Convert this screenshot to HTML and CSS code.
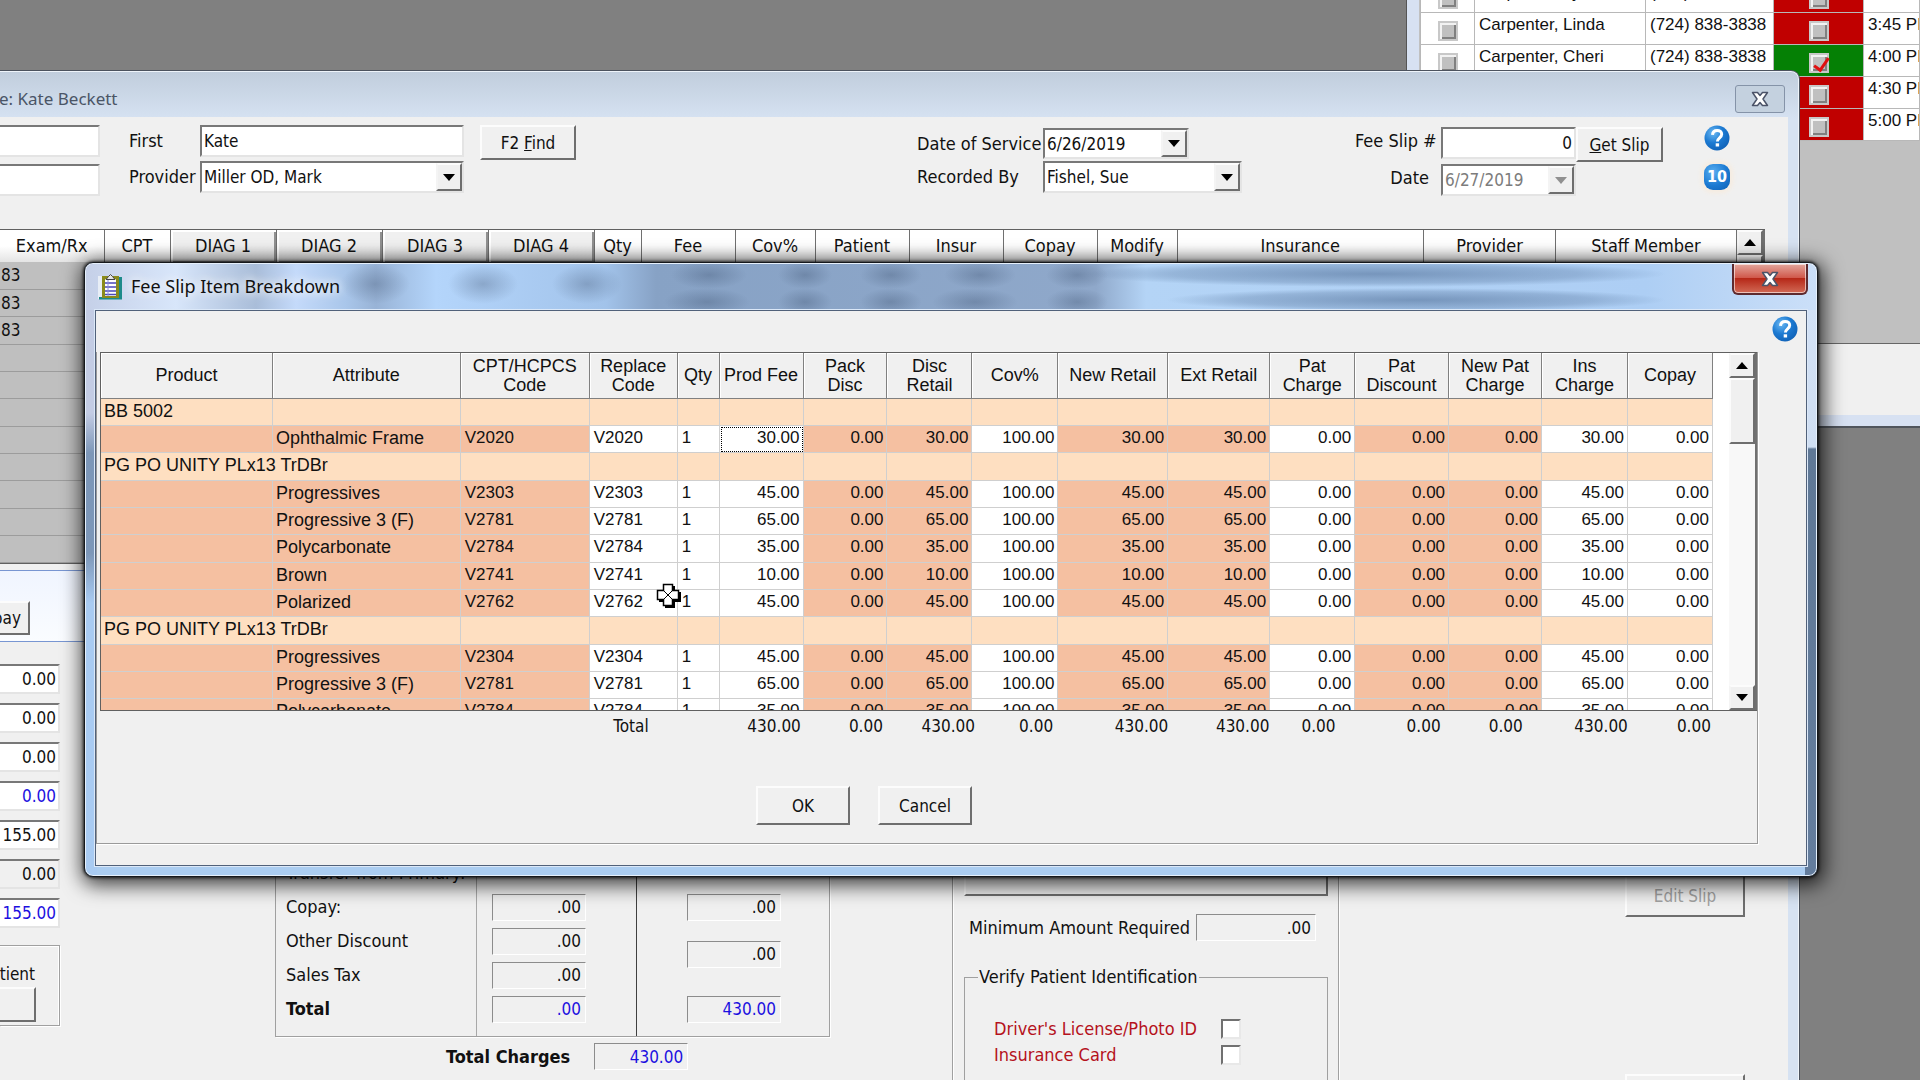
FILE: index.html
```html
<!DOCTYPE html>
<html lang="en">
<head>
    <meta charset="UTF-8">
    <meta name="viewport" content="width=device-width, initial-scale=1.0">
    <title>Fee Slip Item Breakdown</title>
    <link rel="stylesheet" href="styles.css">
</head>
<body>
    <svg class="defs" width="0" height="0" aria-hidden="true">
        <defs>
            <radialGradient id="ball" cx="0.35" cy="0.3" r="0.8">
                <stop offset="0" stop-color="#6bb8f2"/>
                <stop offset="0.5" stop-color="#1c7ad2"/>
                <stop offset="1" stop-color="#0f5fb4"/>
            </radialGradient>
            <symbol id="icon-close" viewBox="0 0 18 16">
                <path d="M1.5 1.5h5L9 4.500l2.500-3h5L12 8l4.500 6.500h-5L9 11.500l-2.500 3h-5L6 8z" fill="#fff" stroke="#4b5368" stroke-width="1.500" stroke-linejoin="round"/>
            </symbol>
            <symbol id="icon-help" viewBox="0 0 26 26">
                <circle cx="13" cy="13" r="12.500" fill="url(#ball)"/>
                <path d="M8.500 9.800C8.700 6.800 10.700 5.400 13.200 5.400c2.600 0 4.500 1.500 4.500 3.900 0 3.400-4.300 3.600-4.300 7.200" fill="none" stroke="#fff" stroke-width="3"/>
                <rect x="11.700" y="18.300" width="3.400" height="3.200" fill="#fff"/>
            </symbol>
        </defs>
    </svg>

    <div class="desktop">
        <!-- Appointment list -->
        <section class="window schedule">
            <table class="schedule-table">
                <colgroup><col class="c-check"><col class="c-name"><col class="c-phone"><col class="c-flag"><col></colgroup>
                <tbody id="scheduleRows"></tbody>
            </table>
        </section>

        <!-- Fee slip -->
        <section class="window fee-slip">
            <header class="titlebar">
                <h1>e: Kate Beckett</h1>
                <button class="close" type="button" aria-label="Close fee slip"><svg width="18" height="16"><use href="#icon-close"/></svg></button>
            </header>
            <div class="client">
                <form class="form-bar">
                    <div class="fields cut">
                        <input class="box" type="text" aria-label="Last">
                        <input class="box" type="text" aria-label="Location">
                    </div>
                    <div class="fields patient">
                        <label for="first">First</label>
                        <input class="box" id="first" type="text" value="Kate">
                        <label for="provider">Provider</label>
                        <div class="combo">
                            <select id="provider"><option>Miller OD, Mark</option></select>
                            <span class="arrow down"></span>
                        </div>
                    </div>
                    <button class="btn find" type="button">F2 <u>F</u>ind</button>
                    <div class="fields service">
                        <label for="service">Date of Service</label>
                        <div class="combo date">
                            <select id="service"><option>6/26/2019</option></select>
                            <span class="arrow down"></span>
                        </div>
                        <label for="recorded">Recorded By</label>
                        <div class="combo">
                            <select id="recorded"><option>Fishel, Sue</option></select>
                            <span class="arrow down"></span>
                        </div>
                    </div>
                    <div class="fields slip">
                        <label for="slipNo">Fee Slip #</label>
                        <input class="box num" id="slipNo" type="text" value="0">
                        <button class="btn get" type="button"><u>G</u>et Slip</button>
                        <label for="slipDate">Date</label>
                        <div class="combo">
                            <select id="slipDate" disabled><option>6/27/2019</option></select>
                            <span class="arrow down"></span>
                        </div>
                    </div>
                    <div class="help-col">
                        <button class="icon-btn" type="button" aria-label="Help"><svg width="26" height="26"><use href="#icon-help"/></svg></button>
                        <button class="icon-btn ten" type="button">10</button>
                    </div>
                </form>

                <div class="slip-grid">
                    <table class="slip-table">
                        <thead>
                            <tr>
                                <th class="w-exam">Exam/Rx</th>
                                <th class="w-cpt">CPT</th>
                                <th class="w-diag raised">DIAG 1</th>
                                <th class="w-diag raised">DIAG 2</th>
                                <th class="w-diag raised">DIAG 3</th>
                                <th class="w-diag raised">DIAG 4</th>
                                <th class="w-qty">Qty</th>
                                <th class="w-money">Fee</th>
                                <th class="w-small">Cov%</th>
                                <th class="w-money">Patient</th>
                                <th class="w-money">Insur</th>
                                <th class="w-money">Copay</th>
                                <th class="w-small">Modify</th>
                                <th>Insurance</th>
                                <th class="w-prov">Provider</th>
                                <th class="w-staff">Staff Member</th>
                            </tr>
                        </thead>
                        <tbody id="slipRows"></tbody>
                    </table>
                    <div class="scrollbar"><span class="arrow up"></span><span class="thumb"></span></div>
                </div>

                <div class="copay-band">
                    <button class="btn" type="button">Copay</button>
                </div>

                <div class="lower">
                    <div class="left-col">
                        <input class="box num" type="text" value="0.00" aria-label="Amount 1">
                        <input class="box num" type="text" value="0.00" aria-label="Amount 2">
                        <input class="box num" type="text" value="0.00" aria-label="Amount 3">
                        <input class="box num blue" type="text" value="0.00" aria-label="Amount 4">
                        <input class="box num" type="text" value="155.00" aria-label="Amount 5">
                        <input class="box num locked" type="text" value="0.00" aria-label="Amount 6" readonly>
                        <input class="box num blue" type="text" value="155.00" aria-label="Amount 7">
                        <div class="patient-box">
                            <span>Patient</span>
                            <button class="btn" type="button" aria-label="Patient"></button>
                        </div>
                    </div>

                    <div class="charges">
                        <div class="charges-box">
                            <div class="charge-col names">
                                <span>Transfer from Primary:</span>
                                <label for="copay">Copay:</label>
                                <label for="discount">Other Discount</label>
                                <label for="tax">Sales Tax</label>
                                <label for="total"><b>Total</b></label>
                            </div>
                            <div class="charge-col values">
                                <input class="flat" id="copay" value=".00" readonly>
                                <input class="flat" id="discount" value=".00" readonly>
                                <input class="flat" id="tax" value=".00" readonly>
                                <input class="flat blue" id="total" value=".00" readonly>
                            </div>
                            <div class="charge-col insured">
                                <input class="flat" value=".00" aria-label="Insurance copay" readonly>
                                <input class="flat" value=".00" aria-label="Insurance tax" readonly>
                                <input class="flat blue" value="430.00" aria-label="Insurance total" readonly>
                            </div>
                        </div>
                        <div class="total-charges">
                            <label for="totalCharges"><b>Total Charges</b></label>
                            <input class="flat blue" id="totalCharges" value="430.00" readonly>
                        </div>
                    </div>

                    <div class="verify">
                        <button class="btn wide" type="button" aria-label="Payment"></button>
                        <div class="minimum">
                            <label for="minimum">Minimum Amount Required</label>
                            <input class="flat" id="minimum" value=".00" readonly>
                        </div>
                        <fieldset>
                            <legend>Verify Patient Identification</legend>
                            <div class="check-row"><label for="license">Driver's License/Photo ID</label><input id="license" type="checkbox"></div>
                            <div class="check-row"><label for="card">Insurance Card</label><input id="card" type="checkbox"></div>
                        </fieldset>
                    </div>

                    <div class="slip-actions">
                        <button class="btn" type="button" disabled>Edit Slip</button>
                        <button class="btn" type="button" aria-label="More"></button>
                    </div>
                </div>
            </div>
        </section>

        <!-- Item breakdown dialog -->
        <section class="window dialog" role="dialog" aria-labelledby="dialogTitle">
            <header class="titlebar">
                <svg class="clipboard" width="26" height="26" viewBox="0 0 26 26">
                    <rect x="1" y="2" width="20" height="23" fill="#e8eef6"/>
                    <path d="M2 25.500h23V3h-3v20H2z" fill="#1b8a8a"/>
                    <rect x="5" y="2" width="17" height="22" fill="#8a8a1c"/>
                    <rect x="8" y="5" width="11" height="17" fill="#fff"/>
                    <path d="M8 9h11M8 13h11M8 17h11M8 20.500h11" stroke="#4a48b8" stroke-width="1.500"/>
                    <path d="M11 5v17" stroke="#8d8ce0"/>
                    <path d="M9 5.500l2.500-3 2-2 2 2 2.500 3z" fill="#e6e6e6" stroke="#444"/>
                </svg>
                <h2 id="dialogTitle">Fee Slip Item Breakdown</h2>
                <button class="close red" type="button" aria-label="Close"><svg width="18" height="16"><use href="#icon-close"/></svg></button>
            </header>
            <div class="client">
                <div class="tools">
                    <button class="icon-btn" type="button" aria-label="Help"><svg width="26" height="26"><use href="#icon-help"/></svg></button>
                </div>
                <div class="group">
                    <div class="item-grid">
                        <div class="item-scroll">
                            <table class="item-table">
                                <colgroup id="itemCols"></colgroup>
                                <thead>
                                    <tr>
                                        <th>Product</th>
                                        <th>Attribute</th>
                                        <th>CPT/HCPCS<br>Code</th>
                                        <th>Replace<br>Code</th>
                                        <th>Qty</th>
                                        <th>Prod Fee</th>
                                        <th>Pack<br>Disc</th>
                                        <th>Disc<br>Retail</th>
                                        <th>Cov%</th>
                                        <th>New Retail</th>
                                        <th>Ext Retail</th>
                                        <th>Pat<br>Charge</th>
                                        <th>Pat<br>Discount</th>
                                        <th>New Pat<br>Charge</th>
                                        <th>Ins<br>Charge</th>
                                        <th>Copay</th>
                                    </tr>
                                </thead>
                                <tbody id="itemRows"></tbody>
                            </table>
                        </div>
                        <div class="scrollbar">
                            <span class="arrow up"></span><span class="thumb"></span><span class="arrow down"></span>
                        </div>
                    </div>
                    <div class="totals" id="totals"></div>
                    <div class="dialog-buttons">
                        <button class="btn" type="button">OK</button>
                        <button class="btn" type="button">Cancel</button>
                    </div>
                </div>
            </div>
        </section>

        <svg class="pointer" width="26" height="26" viewBox="0 0 26 26" aria-hidden="true">
            <path d="M9 3h10v6h6v10h-6v6H9v-6H3V9h6z" fill="#000"/>
            <path d="M7.500 1.500h9v6h6v9h-6v6h-9v-6h-6v-9h6z" fill="#fff" stroke="#000" stroke-width="1.500"/>
            <path d="M7.500 7.500l9 9M16.500 7.500l-9 9" stroke="#000"/>
        </svg>
    </div>

    <script src="script.js"></script>
</body>
</html>
```

FILE: styles.css
```css
* {
    margin: 0;
    padding: 0;
    box-sizing: border-box;
}

body {
    font-family: Tahoma, "DejaVu Sans Condensed", sans-serif;
    font-size: 17px;
    line-height: 20px;
    color: #111;
}

input, select, button {
    font: inherit;
    color: inherit;
    border-radius: 0;
}

label, legend, .names {
    font-size: 18px;
}

.defs {
    position: absolute;
}

.desktop {
    position: relative;
    height: 100vh;
    overflow: hidden;
    background: #808080;
}

.window {
    position: absolute;
}

/* ---------- shared controls ---------- */
.btn {
    background: #f0f0f0;
    border: 2px solid;
    border-color: #fcfcfc #6e6e6e #6e6e6e #fcfcfc;
}

.btn:disabled {
    color: #a0a0a0;
}

.box, .combo {
    height: 32px;
    background: #fff;
    border: 2px solid;
    border-color: #787878 #e4e4e4 #e4e4e4 #787878;
    min-width: 0;
    width: 100%;
}

.box {
    padding: 0 2px;
}

.num {
    text-align: right;
}

.blue {
    color: #1c10e0;
}

.locked {
    background: #f0f0f0;
}

.flat {
    width: 94px;
    height: 27px;
    padding: 0 4px;
    text-align: right;
    background: #f0f0f0;
    border: 1px solid;
    border-color: #8c8c8c #fff #fff #8c8c8c;
}

.combo {
    display: flex;
}

.combo select {
    flex: 1;
    min-width: 0;
    padding-left: 2px;
    border: none;
    appearance: none;
    background: transparent;
}

.combo select:disabled {
    color: #7c7c7c;
    opacity: 1;
}

.arrow {
    display: flex;
    align-items: center;
    justify-content: center;
    width: 26px;
    background: #f0f0f0;
    border: 2px solid;
    border-color: #fcfcfc #6e6e6e #6e6e6e #f4f4f4;
}

.arrow::after {
    content: "";
    border: 6px solid transparent;
    border-bottom: none;
    border-top: 7px solid #000;
}

.arrow.up::after {
    border: 6px solid transparent;
    border-top: none;
    border-bottom: 7px solid #000;
}

select:disabled + .arrow::after {
    border-top-color: #909090;
}

.icon-btn {
    width: 26px;
    height: 26px;
    border: none;
    background: none;
}

.icon-btn svg {
    display: block;
}

.ten {
    border-radius: 9px;
    background: radial-gradient(circle at 35% 30%, #5aaef0, #1c7ad2 55%, #0f5fb4);
    color: #fff;
    font-weight: bold;
    line-height: 26px;
    font-size: 16px;
    box-shadow: 0 0 4px 3px #f6ece0;
}

.scrollbar {
    display: flex;
    flex-direction: column;
    width: 28px;
    background: #f8f8f8;
    border-right: 2px solid #707070;
}

.scrollbar .arrow {
    height: 25px;
}

.scrollbar .thumb {
    height: 66px;
    background: #f0f0f0;
    border: 2px solid;
    border-color: #fcfcfc #6e6e6e #6e6e6e #fcfcfc;
}

.scrollbar .arrow.down {
    margin-top: auto;
}

.titlebar {
    display: flex;
    font-family: "Segoe UI", "Noto Sans", sans-serif;
}

.titlebar h1, .titlebar h2 {
    font-size: 18px;
    font-weight: normal;
    white-space: nowrap;
}

.titlebar h1 {
    font-size: 17px;
}

.close {
    display: flex;
    align-items: center;
    justify-content: center;
    margin-left: auto;
}

/* ---------- appointment list ---------- */
.schedule {
    top: 0;
    right: 0;
    width: 514px;
    height: 428px;
    overflow: hidden;
    background: linear-gradient(#c0c0c0 343px, #666 343px, #666 344px, #f0f0f0 344px);
    border-left: 1px solid #555;
    border-bottom: 2px solid #50555c;
    box-shadow: inset 12px -11px #d7e1f2;
    padding-left: 13px;
}

.schedule-table {
    width: 100%;
    margin-top: -20px;
    table-layout: fixed;
    border-collapse: collapse;
    background: #fff;
    font-family: "Liberation Sans", Arial, sans-serif;
}

.c-check { width: 54px; }
.c-name { width: 171px; }
.c-phone { width: 128px; }
.c-flag { width: 90px; }

.schedule-table td {
    height: 32px;
    padding: 2px 4px 0;
    border: 1px solid #b8b8b8;
    white-space: nowrap;
    overflow: hidden;
    vertical-align: top;
}

.schedule-table .tick {
    text-align: center;
    line-height: 0;
    padding-top: 8px;
}

.schedule-table input {
    appearance: none;
    width: 20px;
    height: 20px;
    background: #c0c0c0;
    border: 2px solid #c8c8c8;
    box-shadow: inset 2px 2px #f2f2f2, inset -2px -2px #808080;
}

.schedule-table .open { background: #c00000; }
.schedule-table .arrived { background: #058005; }

.schedule-table .arrived input::after {
    content: "";
    display: block;
    width: 6px;
    height: 13px;
    margin-left: 6px;
    border: solid #e01010;
    border-width: 0 3px 3px 0;
    transform: rotate(35deg);
}

/* ---------- fee slip window ---------- */
.fee-slip {
    top: 70px;
    left: 0;
    right: 120px;
    bottom: -20px;
    padding-right: 11px;
    background: linear-gradient(#c0cddc, #d6e2f2 48px);
    border: 1px solid #4c535e;
    border-left: none;
    border-radius: 0 9px 0 0;
    box-shadow: inset 0 1px #eef4fa, inset -1px 0 #eef4fa;
}

.fee-slip .titlebar {
    height: 46px;
    padding: 14px 3px 0 0;
}

.fee-slip h1 {
    margin-left: -1px;
    line-height: 28px;
    color: #4a5566;
}

.fee-slip .close {
    width: 50px;
    height: 28px;
    background: #c4d1df;
    border: 1px solid #8593a8;
    border-radius: 3px;
}

.fee-slip > .client {
    height: 100%;
    background: #f0f0f0;
}

.form-bar {
    display: flex;
    align-items: flex-start;
    height: 112px;
    padding: 8px 58px 0 0;
}

.fields {
    display: grid;
    align-items: center;
    white-space: nowrap;
}

.cut {
    width: 100px;
    row-gap: 7px;
}

.cut .box {
    border-left: none;
}

.patient {
    grid-template-columns: 71px 264px;
    row-gap: 4px;
    margin-left: 29px;
}

.find {
    width: 96px;
    height: 35px;
    margin-left: 16px;
}

.service {
    grid-template-columns: 126px 199px;
    row-gap: 2px;
    padding-top: 3px;
    margin-left: auto;
}

.service .date {
    width: 146px;
    height: 31px;
}

.slip {
    grid-template-columns: 86px 135px 87px;
    row-gap: 2px;
    align-items: start;
    padding-top: 2px;
    margin-left: 113px;
}

.slip label {
    padding: 4px 12px 0 0;
}

.slip label:first-child {
    padding-right: 0;
}

.slip label[for="slipDate"] {
    text-align: right;
}

.get {
    height: 35px;
}

.help-col {
    display: grid;
    row-gap: 13px;
    margin-left: 41px;
}

.slip-grid {
    display: flex;
    height: 335px;
    margin-right: 23px;
    background: #bfbfbf;
    border-top: 1px solid #606060;
    border-bottom: 1px solid #606060;
}

.slip-table {
    flex: 1;
    align-self: flex-start;
    table-layout: fixed;
    border-collapse: collapse;
    width: 100%;
}

.slip-table th {
    height: 32px;
    font-size: 18px;
    font-weight: normal;
    background: linear-gradient(#fff 50%, #e4e4e4);
    border-right: 1px solid #707070;
}

.slip-table .raised {
    background: linear-gradient(#f0f0f0 50%, #d4d4d4);
    box-shadow: inset 2px 2px #fff, inset -2px -1px #909090;
}

.w-exam { width: 104px; }
.w-cpt { width: 66px; }
.w-diag { width: 106px; }
.w-qty { width: 47px; }
.w-money { width: 94px; }
.w-small { width: 80px; }
.w-prov { width: 132px; }
.w-staff { width: 181px; }

.slip-table td, .item-table td {
    height: 27px;
}

.slip-table tr:nth-child(3n) td, .item-table tbody tr:nth-child(3n) td {
    height: 28px;
}

.slip-table td {
    padding-left: 1px;
    border-bottom: 1px solid #9c9c9c;
}

.copay-band {
    height: 72px;
    margin-top: 6px;
    padding-top: 30px;
    background: linear-gradient(#f0f5ff, #fafcff);
    border-top: 1px solid #7896d2;
    border-bottom: 1px solid #7896d2;
}

.copay-band .btn {
    width: 66px;
    height: 34px;
    margin-left: -36px;
    padding-right: 7px;
    text-align: right;
}

.lower {
    display: flex;
    align-items: flex-start;
    padding-top: 22px;
}

.left-col {
    display: flex;
    flex-direction: column;
    gap: 9px;
    width: 60px;
}

.left-col .box {
    height: 30px;
    border-left: none;
}

.patient-box {
    display: flex;
    flex-direction: column;
    align-items: flex-end;
    gap: 3px;
    height: 81px;
    margin-top: 8px;
    padding: 18px 23px 0 0;
    border: 1px solid #a0a0a0;
    border-left: none;
    box-shadow: inset -1px 1px #fff, 1px 1px #fff;
}

.patient-box span {
    padding-right: 1px;
}

.patient-box .btn {
    width: 60px;
    height: 35px;
}

.charges {
    margin-left: 215px;
}

.charges-box {
    display: grid;
    grid-template-columns: 201px 160px 192px;
    height: 373px;
    border: 1px solid #a0a0a0;
    box-shadow: 1px 1px #fff;
}

.charge-col {
    display: grid;
    grid-auto-rows: 34px;
    align-content: end;
    align-items: center;
    padding-bottom: 10px;
}

.names {
    padding-left: 10px;
    border-right: 1px solid #a8a8a8;
}

.values {
    padding-left: 15px;
    border-right: 1px solid #404040;
}

.insured {
    grid-template-rows: 34px 60px 50px;
    padding-left: 50px;
    padding-bottom: 2px;
}

.total-charges {
    display: flex;
    align-items: center;
    gap: 24px;
    margin: 6px 0 0 171px;
}

.verify {
    width: 387px;
    height: 440px;
    margin-left: 122px;
    padding: 196px 10px 0 11px;
    border: 1px solid #a0a0a0;
    border-width: 0 1px;
    box-shadow: 1px 0 #fff, inset 1px 0 #fff;
}

.wide {
    width: 100%;
    height: 36px;
}

.minimum {
    display: flex;
    align-items: center;
    justify-content: space-between;
    padding: 16px 12px 26px 5px;
    white-space: nowrap;
}

.minimum .flat {
    width: 120px;
}

fieldset {
    height: 130px;
    padding: 32px 86px 0 29px;
    border: 1px solid #a0a0a0;
}

legend {
    margin-left: -16px;
    padding: 0 1px;
}

.check-row {
    display: flex;
    align-items: center;
    justify-content: space-between;
    margin-bottom: 6px;
    color: #b5121c;
    white-space: nowrap;
}

.check-row input {
    appearance: none;
    width: 20px;
    height: 20px;
    background: #fff;
    border: 2px solid;
    border-color: #707070 #e8e8e8 #e8e8e8 #707070;
}

.slip-actions {
    display: flex;
    flex-direction: column;
    gap: 157px;
    width: 120px;
    margin: 211px 0 0 286px;
}

.slip-actions .btn {
    height: 42px;
}

/* ---------- item breakdown dialog ---------- */
.dialog {
    top: 262px;
    left: 84px;
    right: 102px;
    padding: 0 10px 10px;
    border: 1px solid #15181c;
    border-radius: 9px;
    background:
        linear-gradient(#c3cce4 0, #c3cce4 150px, #7d97b8 190px, #7d97b8 290px, #a9cbf2 340px) left / 12px 100% no-repeat,
        linear-gradient(#d3e2f7 0, #cfdef2 184px, #5f7896 186px, #647d9d) right / 12px 100% no-repeat,
        #abcdf1;
    box-shadow: inset 0 0 0 1px #e6f0fb, 0 0 3px 1px rgba(0,0,0,0.7), 2px 4px 20px 4px rgba(0,0,0,0.75);
}

/* glass caption with what shows through from the window below */
.dialog .titlebar {
    height: 46px;
    margin: 1px -9px 0;
    padding-left: 11px;
    border-radius: 8px 8px 0 0;
    background:
        radial-gradient(closest-side, rgba(70,90,120,0.35), transparent) 254px 0 / 70px 40px no-repeat,
        radial-gradient(closest-side, rgba(70,90,120,0.35), transparent) 362px 0 / 70px 40px no-repeat,
        radial-gradient(closest-side, rgba(70,90,120,0.35), transparent) 466px 0 / 70px 40px no-repeat,
        radial-gradient(closest-side, rgba(50,70,100,0.3), transparent) 585px -3px / 76px 28px no-repeat,
        radial-gradient(closest-side, rgba(50,70,100,0.3), transparent) 578px 24px / 86px 28px no-repeat,
        radial-gradient(closest-side, rgba(50,70,100,0.3), transparent) 692px -3px / 54px 28px no-repeat,
        radial-gradient(closest-side, rgba(50,70,100,0.3), transparent) 692px 24px / 54px 28px no-repeat,
        radial-gradient(closest-side, rgba(50,70,100,0.3), transparent) 774px -3px / 62px 28px no-repeat,
        radial-gradient(closest-side, rgba(50,70,100,0.3), transparent) 774px 24px / 62px 28px no-repeat,
        radial-gradient(closest-side, rgba(50,70,100,0.3), transparent) 858px -3px / 72px 28px no-repeat,
        radial-gradient(closest-side, rgba(50,70,100,0.3), transparent) 846px 24px / 86px 28px no-repeat,
        radial-gradient(closest-side, rgba(50,70,100,0.3), transparent) 960px -3px / 62px 28px no-repeat,
        radial-gradient(closest-side, rgba(50,70,100,0.3), transparent) 960px 24px / 62px 28px no-repeat,
        radial-gradient(closest-side, rgba(80,110,150,0.6), rgba(80,110,150,0.3) 70%, transparent) 1000px -3px / 580px 26px no-repeat,
        radial-gradient(closest-side, rgba(80,110,150,0.6), rgba(80,110,150,0.3) 70%, transparent) 1080px 24px / 500px 24px no-repeat,
        linear-gradient(90deg, #c5d0e8, #d8e6fa 90px, #a9bdd9 170px, #c4dafa 210px, #a9c6ea 260px, #98b3d6 290px, #b4d5fb 350px, #a2c3ea 520px, #87a2c5 570px, #8fa8ca 1010px, #b4d4f6 1060px, #adcef4 1560px, #cbdff8);
}

.clipboard {
    margin-top: 10px;
    margin-right: 8px;
}

.dialog h2 {
    line-height: 45px;
    text-shadow: 0 0 8px #fff, 0 0 14px #fff;
}

.dialog .close {
    width: 76px;
    height: 31px;
    margin-right: 8px;
    background: linear-gradient(#e3a79d, #d0574a 48%, #b62818 50%, #d26a56);
    border: 2px solid #5e2a2e;
    border-top: none;
    border-radius: 0 0 6px 6px;
    box-shadow: inset 0 0 0 1px rgba(255,255,255,0.6);
}

.dialog .client {
    padding-bottom: 21px;
    background: #f0f0f0;
    border: 1px solid #51617a;
    box-shadow: 0 0 0 1px #dbe8f8;
}

.tools {
    display: flex;
    justify-content: flex-end;
    height: 41px;
    padding: 5px 8px 0 0;
}

.group {
    margin: 0 48px 0 0;
    padding-bottom: 18px;
    border: 1px solid #9a9a9a;
    border-top: none;
    box-shadow: 1px 1px #fff;
}

.item-grid {
    display: flex;
    height: 359px;
    margin-left: 3px;
    background: #fff;
    border: 1px solid #606060;
    border-right: none;
}

.item-scroll {
    flex: 1;
    overflow: hidden;
    padding-right: 16px;
}

.item-table {
    width: 100%;
    table-layout: fixed;
    border-spacing: 0;
    font-family: Arial, "Liberation Sans", sans-serif;
}

.item-table th {
    height: 46px;
    font-size: 18px;
    font-weight: normal;
    line-height: 19px;
    white-space: nowrap;
    background: #f0f0f0;
    border-right: 1px solid #808080;
    border-bottom: 1px solid #808080;
    box-shadow: inset 1px 1px #fff;
}

.item-table td {
    padding: 0 3px 3px;
    text-align: right;
    white-space: nowrap;
    border-right: 1px solid #cfcfcf;
    border-bottom: 1px solid #cfcfcf;
}

.item-table td.text {
    padding-left: 4px;
    text-align: left;
}

.item-table td.name {
    padding-left: 3px;
    font-size: 18px;
}

.item-table td.locked {
    background: #f5c0a1;
}

.item-table .product td {
    background: #fedfc1;
}

.item-table .current {
    outline: 1px dotted #000;
    outline-offset: -2px;
}

.totals {
    display: grid;
    grid-template-columns: 551fr 152fr 82fr 92fr 78fr 115fr 101fr 66fr 105fr 82fr 105fr 83fr 46fr;
    height: 75px;
    padding-top: 5px;
    text-align: right;
}

.dialog-buttons {
    display: flex;
    gap: 28px;
    margin-left: 659px;
}

.dialog-buttons .btn {
    width: 94px;
    height: 39px;
}

.pointer {
    position: absolute;
    top: 583px;
    left: 656px;
}
```

FILE: script.js
```js
// Appointment rows: name, phone, time, arrived
const appointments = [
    ['Carpenter, Lynn', '(724) 838-3838', '3:30 PM', false],
    ['Carpenter, Linda', '(724) 838-3838', '3:45 PM', false],
    ['Carpenter, Cheri', '(724) 838-3838', '4:00 PM', true],
    ['', '', '4:30 PM', false],
    ['', '', '5:00 PM', false]
];

document.getElementById('scheduleRows').innerHTML = appointments.map(([name, phone, time, arrived]) => `
    <tr>
        <td class="tick"><input type="checkbox" aria-label="Select ${time}"></td>
        <td>${name}</td>
        <td>${phone}</td>
        <td class="tick ${arrived ? 'arrived' : 'open'}"><input type="checkbox" aria-label="Arrived ${time}" ${arrived ? 'checked' : ''}></td>
        <td>${time}</td>
    </tr>`).join('');

// Fee slip rows behind the dialog
const slipCodes = ['83', '83', '83', '', '', '', '', '', '', '', ''];
document.getElementById('slipRows').innerHTML = slipCodes
    .map(code => `<tr><td colspan="16">${code}</td></tr>`).join('');

// Item breakdown: a string is a product heading, an array is [attribute, code, fee]
const items = [
    'BB 5002',
    ['Ophthalmic Frame', 'V2020', '30.00'],
    'PG PO UNITY PLx13 TrDBr',
    ['Progressives', 'V2303', '45.00'],
    ['Progressive 3 (F)', 'V2781', '65.00'],
    ['Polycarbonate', 'V2784', '35.00'],
    ['Brown', 'V2741', '10.00'],
    ['Polarized', 'V2762', '45.00'],
    'PG PO UNITY PLx13 TrDBr',
    ['Progressives', 'V2304', '45.00'],
    ['Progressive 3 (F)', 'V2781', '65.00'],
    ['Polycarbonate', 'V2784', '35.00']
];

const widths = [172, 188, 129, 88, 42, 84, 84, 85, 86, 110, 102, 85, 94, 93, 86, 85];
const sum = widths.reduce((a, b) => a + b);
document.getElementById('itemCols').innerHTML = widths
    .map(w => `<col style="width: ${w / sum * 100}%">`).join('');

function itemRow(item, index) {
    if (typeof item === 'string') {
        const span = item.length > 20 ? 2 : 1;
        return `<tr class="product"><td class="text name" colspan="${span}">${item}</td>${'<td></td>'.repeat(16 - span)}</tr>`;
    }
    const [attribute, code, fee] = item;
    return `
        <tr>
            <td class="locked"></td>
            <td class="text name locked">${attribute}</td>
            <td class="text locked">${code}</td>
            <td class="text">${code}</td>
            <td class="text">1</td>
            <td class="${index === 1 ? 'current' : ''}">${fee}</td>
            <td class="locked">0.00</td>
            <td class="locked">${fee}</td>
            <td>100.00</td>
            <td class="locked">${fee}</td>
            <td class="locked">${fee}</td>
            <td>0.00</td>
            <td class="locked">0.00</td>
            <td class="locked">0.00</td>
            <td>${fee}</td>
            <td>0.00</td>
        </tr>`;
}

document.getElementById('itemRows').innerHTML = items.map(itemRow).join('');

const totals = ['Total', '430.00', '0.00', '430.00', '0.00', '430.00', '430.00', '0.00', '0.00', '0.00', '430.00', '0.00'];
document.getElementById('totals').innerHTML = totals.map(t => `<span>${t}</span>`).join('');
```
